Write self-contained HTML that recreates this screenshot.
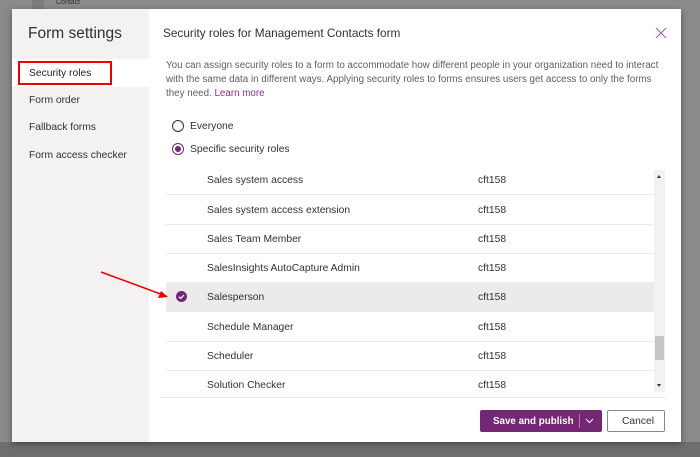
<!DOCTYPE html>
<html><head><style>
body{margin:0;width:700px;height:457px;background:#8a8a8a;font-family:"Liberation Sans",sans-serif;position:relative;overflow:hidden}
.bg1{position:absolute;left:32px;top:0;width:12px;height:457px;background:#7d7d7d}
.ctc{position:absolute;left:56px;top:-1px;font-size:7px;color:#333}
.bot{position:absolute;left:0;top:442px;width:700px;height:15px;background:#6e6e6e}
.dlg{position:absolute;left:12px;top:9px;width:669px;height:433px;background:#fff;box-shadow:0 2px 6px rgba(0,0,0,.4)}
.left{position:absolute;left:0;top:0;width:137px;height:433px;background:#f3f2f1}
.left h1{position:absolute;left:16px;top:16px;margin:0;font-weight:normal;font-size:15.5px;color:#323130}
.nav{position:absolute;left:17px;font-size:10.3px;color:#323130}
.sel{position:absolute;left:0;top:50px;width:137px;height:28px;background:#fff}
.redbox{position:absolute;left:6px;top:52px;width:94px;height:24px;border:2px solid #e00;box-sizing:border-box}
.t{position:absolute;left:151px;top:17px;font-size:11.8px;color:#323130}
.d{position:absolute;left:154px;top:50px;width:498px;font-size:9.8px;line-height:14px;color:#605e5c}
.d a{color:#8a2d8a;text-decoration:none}
.x{position:absolute;left:643px;top:18px;display:block}
.radio{position:absolute;left:160px;width:10px;height:10px;border:1px solid #323130;border-radius:50%}
.rl{position:absolute;left:178px;font-size:10.3px;color:#323130}
.row{position:absolute;left:154px;width:488px;height:29px;border-bottom:1px solid #edebe9;font-size:10.3px;color:#323130}
.row span{position:absolute;top:10px}
.sb{position:absolute;left:642px;top:161px;width:11px;height:222px;background:#f3f2f1}
.btn{position:absolute;top:401px;height:22px;font-size:10.3px;box-sizing:border-box}
</style></head><body>
<div class="bg1"></div><div class="ctc">Contact</div>
<div class="bot"></div>
<div class="dlg">
<div class="left">
<h1>Form settings</h1>
<div class="sel"></div>
<div class="nav" style="top:59px;color:#201f1e">Security roles</div>
<div class="nav" style="top:86px">Form order</div>
<div class="nav" style="top:113px">Fallback forms</div>
<div class="nav" style="top:141px">Form access checker</div>
<div class="redbox"></div>
</div>
<div class="t">Security roles for Management Contacts form</div>
<svg class="x" width="12" height="12"><path d="M1 1L11 11M11 1L1 11" stroke="#9b5a9b" stroke-width="1"/></svg>
<div class="d">You can assign security roles to a form to accommodate how different people in your organization need to interact with the same data in different ways. Applying security roles to forms ensures users get access to only the forms they need. <a>Learn more</a></div>
<div class="radio" style="top:111px"></div><div class="rl" style="top:112px">Everyone</div>
<div class="radio" style="top:134px;border-color:#742774"><div style="position:absolute;left:2px;top:2px;width:6px;height:6px;border-radius:50%;background:#742774"></div></div><div class="rl" style="top:135px">Specific security roles</div>
<div class="row" style="top:156px"><span style="left:41px">Sales system access</span><span style="left:312px">cft158</span></div>
<div class="row" style="top:186px"><span style="left:41px">Sales system access extension</span><span style="left:312px">cft158</span></div>
<div class="row" style="top:215px"><span style="left:41px">Sales Team Member</span><span style="left:312px">cft158</span></div>
<div class="row" style="top:244px"><span style="left:41px">SalesInsights AutoCapture Admin</span><span style="left:312px">cft158</span></div>
<div class="row" style="top:273px;background:#edebe9"><svg style="position:absolute;left:10px;top:9px" width="11" height="11"><circle cx="5.5" cy="5.5" r="5.5" fill="#742774"/><path d="M3 5.7L4.8 7.4L8 4" stroke="#fff" stroke-width="1.2" fill="none"/></svg><span style="left:41px">Salesperson</span><span style="left:312px">cft158</span></div>
<div class="row" style="top:303px"><span style="left:41px">Schedule Manager</span><span style="left:312px">cft158</span></div>
<div class="row" style="top:332px"><span style="left:41px">Scheduler</span><span style="left:312px">cft158</span></div>
<div class="row" style="top:361px;border:none"><span style="left:41px">Solution Checker</span><span style="left:312px">cft158</span></div>
<div class="sb"><div style="position:absolute;left:1px;top:166px;width:9px;height:24px;background:#c8c6c4"></div>
<div style="position:absolute;left:3px;top:5px;border:2.5px solid transparent;border-bottom:3px solid #333;border-top:0"></div>
<div style="position:absolute;left:3px;top:214px;border:2.5px solid transparent;border-top:3px solid #333;border-bottom:0"></div></div>
<div style="position:absolute;left:148px;top:388px;width:506px;height:1px;background:#edebe9"></div>
<div class="btn" style="left:468px;width:122px;background:#742774;color:#fff;font-weight:bold;font-size:9.8px;border-radius:2px"><span style="position:absolute;left:13px;top:6px">Save and publish</span><span style="position:absolute;left:99px;top:4px;width:1px;height:14px;background:#b07ab0"></span><svg style="position:absolute;left:105px;top:8px" width="9" height="6"><path d="M1 1L4.5 4.5L8 1" stroke="#fff" fill="none"/></svg></div>
<div class="btn" style="left:595px;width:58px;border:1px solid #8a8886;border-radius:2px;color:#323130"><span style="position:absolute;left:14px;top:5px">Cancel</span></div>
</div>
<svg style="position:absolute;left:0;top:0" width="700" height="457"><path d="M101 272L166 296" stroke="#e00" stroke-width="1.5"/><path d="M168 297L158 298L161 291Z" fill="#e00"/></svg>
</body></html>
